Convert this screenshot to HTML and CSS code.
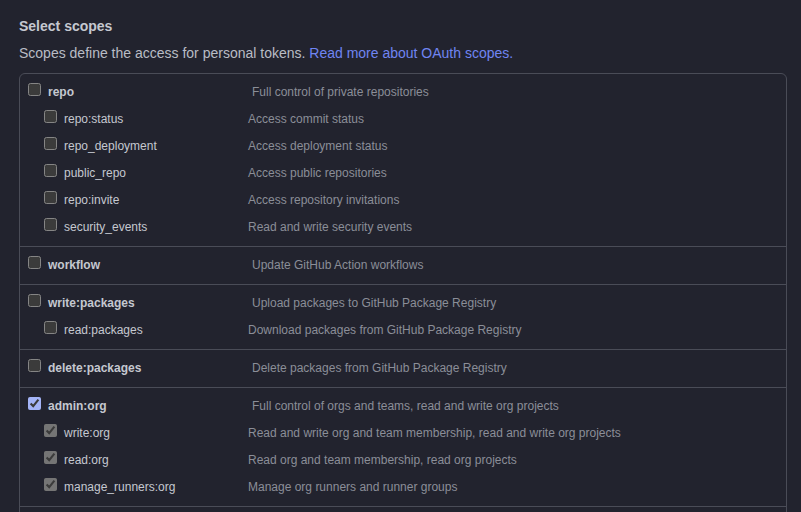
FILE: index.html
```html
<!DOCTYPE html>
<html lang="en">
<head>
    <meta charset="UTF-8">
    <meta name="viewport" content="width=device-width, initial-scale=1.0">
    <title>Select scopes</title>
    <link rel="stylesheet" href="styles.css">
</head>
<body>
<div class="container">
    <h3 class="title">Select scopes</h3>
    <p class="note">Scopes define the access for personal tokens. <a href="#">Read more about OAuth scopes.</a></p>

    <div class="scopes">
        <!-- repo -->
        <div class="group">
            <label class="row parent">
                <input type="checkbox" name="repo">
                <span class="name">repo</span>
                <span class="desc">Full control of private repositories</span>
            </label>
            <label class="row child">
                <input type="checkbox" name="repo:status">
                <span class="name">repo:status</span>
                <span class="desc">Access commit status</span>
            </label>
            <label class="row child">
                <input type="checkbox" name="repo_deployment">
                <span class="name">repo_deployment</span>
                <span class="desc">Access deployment status</span>
            </label>
            <label class="row child">
                <input type="checkbox" name="public_repo">
                <span class="name">public_repo</span>
                <span class="desc">Access public repositories</span>
            </label>
            <label class="row child">
                <input type="checkbox" name="repo:invite">
                <span class="name">repo:invite</span>
                <span class="desc">Access repository invitations</span>
            </label>
            <label class="row child">
                <input type="checkbox" name="security_events">
                <span class="name">security_events</span>
                <span class="desc">Read and write security events</span>
            </label>
        </div>

        <!-- workflow -->
        <div class="group">
            <label class="row parent">
                <input type="checkbox" name="workflow">
                <span class="name">workflow</span>
                <span class="desc">Update GitHub Action workflows</span>
            </label>
        </div>

        <!-- packages -->
        <div class="group">
            <label class="row parent">
                <input type="checkbox" name="write:packages">
                <span class="name">write:packages</span>
                <span class="desc">Upload packages to GitHub Package Registry</span>
            </label>
            <label class="row child">
                <input type="checkbox" name="read:packages">
                <span class="name">read:packages</span>
                <span class="desc">Download packages from GitHub Package Registry</span>
            </label>
        </div>

        <div class="group">
            <label class="row parent">
                <input type="checkbox" name="delete:packages">
                <span class="name">delete:packages</span>
                <span class="desc">Delete packages from GitHub Package Registry</span>
            </label>
        </div>

        <!-- org -->
        <div class="group">
            <label class="row parent">
                <input type="checkbox" name="admin:org" checked>
                <span class="name">admin:org</span>
                <span class="desc">Full control of orgs and teams, read and write org projects</span>
            </label>
            <label class="row child">
                <input type="checkbox" name="write:org" checked disabled>
                <span class="name">write:org</span>
                <span class="desc">Read and write org and team membership, read and write org projects</span>
            </label>
            <label class="row child">
                <input type="checkbox" name="read:org" checked disabled>
                <span class="name">read:org</span>
                <span class="desc">Read org and team membership, read org projects</span>
            </label>
            <label class="row child">
                <input type="checkbox" name="manage_runners:org" checked disabled>
                <span class="name">manage_runners:org</span>
                <span class="desc">Manage org runners and runner groups</span>
            </label>
        </div>

        <div class="group">
            <label class="row parent">
                <input type="checkbox" name="admin:public_key">
                <span class="name">admin:public_key</span>
                <span class="desc">Full control of user public keys</span>
            </label>
        </div>
    </div>
</div>
</body>
</html>
```

FILE: styles.css
```css
html {
    color-scheme: dark;
}

body {
    font-family: 'Liberation Sans', Arial, sans-serif;
    margin: 0;
    padding: 16px 14px 0 19px;
    background-color: #22232e;
    color: #c5c8d0;
}

.container {
    width: 768px;
}

.title {
    margin: 0;
    font-size: 14px;
    line-height: 21px;
    font-weight: bold;
    color: #c5c8d0;
}

.note {
    margin: 6px 0 9px;
    font-size: 14px;
    line-height: 21px;
    color: #b9bcc5;
}

.note a {
    color: #7085f2;
    text-decoration: none;
}

.scopes {
    border: 1px solid #4a4c57;
    border-radius: 6px;
}

.group {
    padding: 4px 0 6px;
    border-bottom: 1px solid #4a4c57;
}

.row {
    display: flex;
    align-items: center;
    height: 27px;
    font-size: 12px;
}

.row input {
    width: 13px;
    height: 13px;
    margin: 0 7px 0 0;
    position: relative;
    top: -2px;
    accent-color: #a4b4f7;
}

.parent {
    padding-left: 8px;
}

.child {
    padding-left: 24px;
}

.name {
    color: #c5c8d0;
}

.parent .name {
    width: 204px;
    font-weight: bold;
}

.child .name {
    width: 184px;
}

.desc {
    color: #8b8e98;
}
```
